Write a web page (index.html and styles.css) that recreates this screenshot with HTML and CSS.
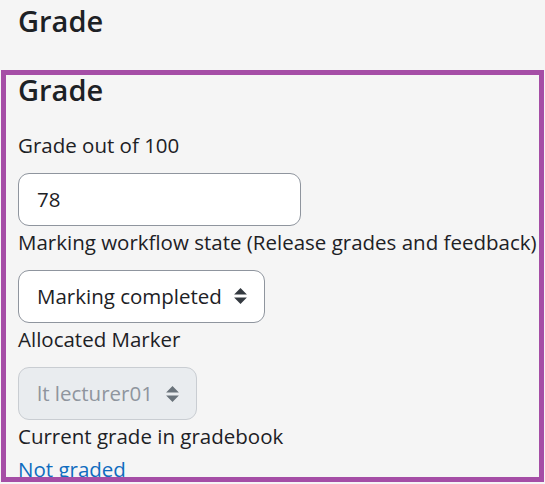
FILE: index.html
```html
<!DOCTYPE html>
<html lang="en">
<head>
<meta charset="utf-8">
<title>Grade</title>
<link rel="stylesheet" href="styles.css">
</head>
<body>
<div class="page">
  <h2 class="page-title">Grade</h2>
  <section class="grade-box">
    <h3 class="box-title">Grade</h3>
    <label class="field-label">Grade out of 100</label>
    <div class="text-input">78</div>
    <label class="field-label">Marking workflow state (Release grades and feedback)</label>
    <div class="select select-workflow">
      <span>Marking completed</span>
      <svg class="arrows" viewBox="0 0 4 5" width="13" height="16"><path d="M2 0L0 2h4zm0 5L0 3h4z"/></svg>
    </div>
    <label class="field-label">Allocated Marker</label>
    <div class="select select-disabled">
      <span>lt lecturer01</span>
      <svg class="arrows" viewBox="0 0 4 5" width="13" height="16"><path d="M2 0L0 2h4zm0 5L0 3h4z"/></svg>
    </div>
    <div class="static-label">Current grade in gradebook</div>
    <a class="grade-link" href="#">Not graded</a>
  </section>
</div>
</body>
</html>
```
FILE: styles.css
```css
html, body {
  margin: 0;
  padding: 0;
  background: #f5f5f5;
}
body {
  font-family: "Open Sans", "Noto Sans", sans-serif;
  color: #1d2125;
  font-size: 20.5px;
  line-height: 32.6px;
  overflow: hidden;
}
.page {
  height: 484px;
  overflow: hidden;
}
.page-title {
  margin: 0;
  padding: 4px 0 0 18px;
  font-size: 29px;
  line-height: 34.8px;
  font-weight: 600;
}
.grade-box {
  margin: 31px 0 0 1px;
  width: 543px;
  height: 412px;
  box-sizing: border-box;
  padding: 3px 0 0 17px;
  outline: 5px solid #a54ea6;
  outline-offset: -5px;
  display: flex;
  flex-direction: column;
  align-items: flex-start;
}
.grade-box > * {
  flex: none;
}
.box-title {
  margin: 0 0 21px 0;
  font-size: 29px;
  line-height: 34.8px;
  font-weight: 600;
}
.field-label {
  display: block;
  margin: 0 0 11.6px 0;
  white-space: nowrap;
}
.text-input {
  box-sizing: border-box;
  width: 283px;
  height: 53px;
  padding: 0 18px;
  background: #fff;
  border: 1px solid #8f959e;
  border-radius: 11px;
  display: flex;
  align-items: center;
}
.select {
  box-sizing: border-box;
  height: 53px;
  padding: 0 17px 0 18px;
  background: #fff;
  border: 1px solid #8f959e;
  border-radius: 11px;
  display: flex;
  align-items: center;
  justify-content: space-between;
}
.select .arrows {
  fill: #343a40;
  flex: none;
}
.select-workflow {
  width: 247px;
}
.select-disabled {
  width: 179px;
  background: #e9ecef;
  border-color: #c9cdd2;
  color: #8f959e;
}
.select-disabled .arrows {
  fill: #6a737b;
}
.static-label {
  margin: 0;
  white-space: nowrap;
}
.grade-link {
  color: #0f6cbf;
  text-decoration: none;
}
```
